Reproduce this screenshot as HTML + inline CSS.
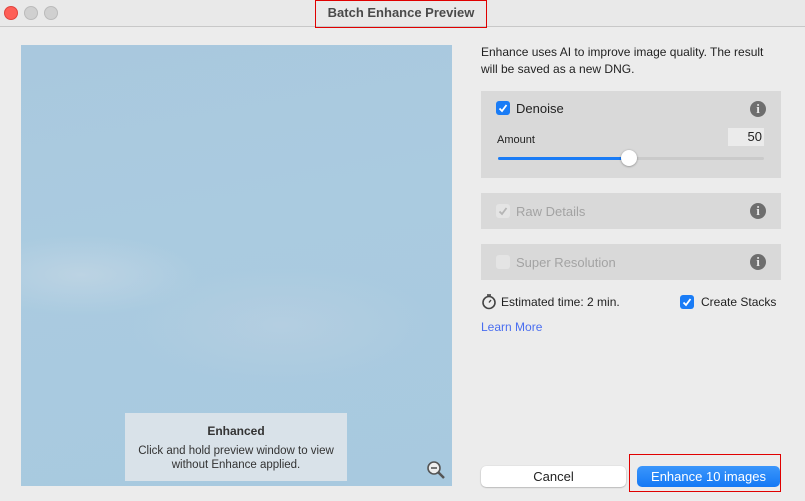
<!DOCTYPE html>
<html><head><style>
body{margin:0;width:805px;height:501px;background:#ececec;font-family:"Liberation Sans",sans-serif;position:relative;overflow:hidden;color:#222}
.a{position:absolute}
.dot{position:absolute;top:6px;width:12px;height:12px;border-radius:50%;background:#d0d0d0;border:0.5px solid #bbb}
.box{position:absolute;left:481px;width:300px;background:#d9d9d9}
.info{position:absolute;width:16px;height:16px;border-radius:50%;background:#6e6e6e;color:#e8e8e8;font:bold 13px "Liberation Serif",serif;text-align:center;line-height:16px}
.lbl{position:absolute;font-size:13px}
</style></head><body>
<div class="a" style="left:0;top:0;width:805px;height:26px;background:#e9e9e9;border-bottom:1px solid #c8c8c8"></div>
<div class="dot" style="left:4px;background:#fe5f57;border-color:#e0443e"></div>
<div class="dot" style="left:24px"></div>
<div class="dot" style="left:44px"></div>
<div class="a" style="left:315px;top:0;width:170px;height:26px;border:1px solid #e00000;font-weight:bold;font-size:13px;color:#4a4a4a;text-align:center;line-height:24px">Batch Enhance Preview</div>

<div class="a" style="left:21px;top:45px;width:431px;height:441px;background:radial-gradient(ellipse 120px 40px at 60px 230px,#bcd3e3,transparent),radial-gradient(ellipse 150px 60px at 260px 280px,#b4cee1,transparent),linear-gradient(170deg,#a9c8de,#aacbe0 40%,#a8c9df)"></div>
<div class="a" style="left:125px;top:413px;width:222px;height:68px;background:#d9e2e9;text-align:center;font-size:11.5px;color:#333">
<div style="font-weight:bold;font-size:12px;margin-top:11px">Enhanced</div>
<div style="margin-top:6px;line-height:14px">Click and hold preview window to view<br>without Enhance applied.</div></div>
<svg class="a" style="left:426px;top:460px" width="20" height="20"><circle cx="8" cy="8" r="6" fill="#eee" stroke="#555" stroke-width="1.6"/><line x1="5" y1="8" x2="11" y2="8" stroke="#555" stroke-width="1.6"/><line x1="12" y1="12" x2="18" y2="18" stroke="#555" stroke-width="2.5"/></svg>

<div class="a" style="left:481px;top:44px;font-size:12px;line-height:17px;width:302px">Enhance uses AI to improve image quality. The result will be saved as a new DNG.</div>

<div class="box" style="top:91px;height:87px"></div>
<svg class="a" style="left:496px;top:101px" width="15" height="15"><rect width="14" height="14" rx="3" fill="#1a7cf6"/><path d="M3.5 7.5 L6 10 L10.5 4" stroke="#fff" stroke-width="1.8" fill="none"/></svg>
<div class="lbl" style="left:516px;top:101px">Denoise</div>
<div class="info" style="left:750px;top:101px">i</div>
<div class="a" style="left:497px;top:134px;font-size:11px">Amount</div>
<div class="a" style="left:728px;top:128px;width:36px;height:18px;background:#ebebeb;font-size:13px;text-align:right;line-height:18px;padding-right:2px;box-sizing:border-box">50</div>
<div class="a" style="left:498px;top:157px;width:266px;height:3px;border-radius:2px;background:#cacaca"></div>
<div class="a" style="left:498px;top:157px;width:132px;height:3px;border-radius:2px;background:#1a7cf6"></div>
<div class="a" style="left:621px;top:150px;width:16px;height:16px;border-radius:50%;background:#fff;box-shadow:0 0.5px 2px rgba(0,0,0,.4)"></div>

<div class="box" style="top:193px;height:36px"></div>
<svg class="a" style="left:496px;top:204px" width="15" height="15"><rect width="14" height="14" rx="3" fill="#e4e4e4"/><path d="M3.5 7.5 L6 10 L10.5 4" stroke="#b5b5b5" stroke-width="1.8" fill="none"/></svg>
<div class="lbl" style="left:516px;top:204px;color:#a3a3a3">Raw Details</div>
<div class="info" style="left:750px;top:203px">i</div>

<div class="box" style="top:244px;height:36px"></div>
<svg class="a" style="left:496px;top:255px" width="15" height="15"><rect width="14" height="14" rx="3" fill="#e4e4e4"/></svg>
<div class="lbl" style="left:516px;top:255px;color:#a3a3a3">Super Resolution</div>
<div class="info" style="left:750px;top:254px">i</div>

<svg class="a" style="left:481px;top:293px" width="16" height="17"><circle cx="8" cy="9.5" r="6" fill="none" stroke="#444" stroke-width="1.6"/><line x1="6" y1="2" x2="10" y2="2" stroke="#444" stroke-width="1.6"/><line x1="8" y1="9.5" x2="10" y2="7" stroke="#444" stroke-width="1.4"/></svg>
<div class="a" style="left:501px;top:295px;font-size:12px">Estimated time: 2 min.</div>
<svg class="a" style="left:680px;top:295px" width="15" height="15"><rect width="14" height="14" rx="3" fill="#1a7cf6"/><path d="M3.5 7.5 L6 10 L10.5 4" stroke="#fff" stroke-width="1.8" fill="none"/></svg>
<div class="a" style="left:701px;top:295px;font-size:12px">Create Stacks</div>
<div class="a" style="left:481px;top:320px;font-size:12px;color:#4a6ef0">Learn More</div>

<div class="a" style="left:481px;top:466px;width:145px;height:21px;background:#fff;border-radius:5px;box-shadow:0 0.5px 1.5px rgba(0,0,0,.35);text-align:center;font-size:13px;line-height:21px">Cancel</div>
<div class="a" style="left:629px;top:454px;width:152px;height:38px;border:1px solid #e00000;box-sizing:border-box"></div>
<div class="a" style="left:637px;top:466px;width:143px;height:21px;background:linear-gradient(#3b96fb,#1479f5);border-radius:5px;color:#fff;text-align:center;font-size:13px;line-height:21px">Enhance 10 images</div>
</body></html>
